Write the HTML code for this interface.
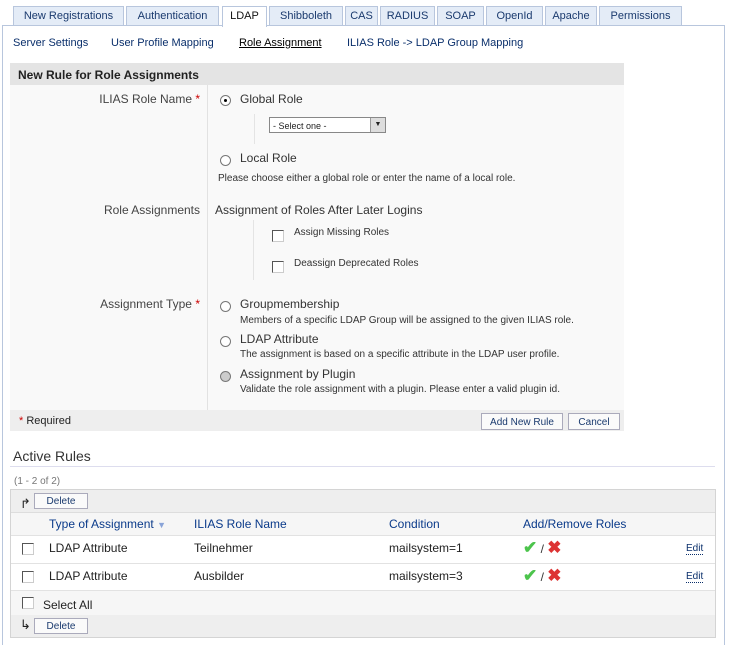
<!DOCTYPE html>
<html><head><style>
*{margin:0;padding:0;box-sizing:border-box}
body{width:731px;height:641px;background:#fff;font-family:"Liberation Sans",Verdana,sans-serif;font-size:12px;color:#222;position:relative;overflow:hidden}
.a{position:absolute;white-space:nowrap}
.tab{position:absolute;top:6px;height:20px;background:#e4ecf7;border:1px solid #b8c6dd;border-bottom:none;color:#1a3a6e;font-size:11px;text-align:center;line-height:18px}
.tab.on{background:#fff;height:21px;color:#111}
.sub{font-size:11px;color:#0a2f6b;top:37px}
.req{color:#c00}
.rad{position:absolute;width:11px;height:11px;border-radius:50%;border:1px solid #777;background:#fff}
.chk{position:absolute;width:12px;height:12px;border:1px solid #555;background:#fff;border-right-color:#ccc;border-bottom-color:#ccc}
.sm{font-size:10px;color:#333}
.btn{position:absolute;height:16px;border:1px solid #aab;background:#fafafa;font-size:10px;color:#1a3a6e;line-height:16px;text-align:center}
.th{font-size:12px;color:#0a3a8a;top:517px}
.td{font-size:12px;color:#222}
</style></head><body>
<div class="tab" style="left:13px;width:111px">New Registrations</div>
<div class="tab" style="left:126px;width:93px">Authentication</div>
<div class="tab" style="left:269px;width:74px">Shibboleth</div>
<div class="tab" style="left:345px;width:33px">CAS</div>
<div class="tab" style="left:380px;width:55px">RADIUS</div>
<div class="tab" style="left:437px;width:47px">SOAP</div>
<div class="tab" style="left:486px;width:57px">OpenId</div>
<div class="tab" style="left:545px;width:52px">Apache</div>
<div class="tab" style="left:599px;width:83px">Permissions</div>
<div class="a" style="left:2px;top:25px;width:723px;height:620px;border:1px solid #b8c6dd;border-bottom:none"></div>
<div class="tab on" style="left:222px;width:45px;top:6px;border-bottom:none;z-index:2">LDAP</div>

<div class="a sub" style="left:13px">Server Settings</div>
<div class="a sub" style="left:111px">User Profile Mapping</div>
<div class="a sub" style="left:239px;color:#000;text-decoration:underline">Role Assignment</div>
<div class="a sub" style="left:347px">ILIAS Role -&gt; LDAP Group Mapping</div>

<div class="a" style="left:10px;top:63px;width:614px;height:368px;background:#f9f9f9;border-bottom:1px solid #d8dde8"></div>
<div class="a" style="left:10px;top:63px;width:614px;height:22px;background:#e4e4e4;font-weight:bold;font-size:12px;color:#222;padding:5px 0 0 8px">New Rule for Role Assignments</div>
<div class="a" style="left:207px;top:85px;width:1px;height:325px;background:#e2e2e2"></div>
<div class="a" style="left:10px;top:410px;width:614px;height:21px;background:#eee"></div>

<div class="a" style="left:10px;width:190px;top:92px;text-align:right;color:#444">ILIAS Role Name <span class="req">*</span></div>
<div class="rad" style="left:220px;top:95px"><div style="width:3px;height:3px;background:#000;border-radius:50%;margin:3px"></div></div>
<div class="a" style="left:240px;top:92px;color:#333">Global Role</div>
<div class="a" style="left:254px;top:114px;width:1px;height:30px;background:#e4e4e4"></div>
<div class="a" style="left:269px;top:117px;width:117px;height:16px;border:1px solid #888;background:#fff;font-size:9px;padding:3px 0 0 3px">- Select one -</div>
<div class="a" style="left:370px;top:118px;width:15px;height:14px;background:#ddd;border-left:1px solid #999;font-size:7px;text-align:center;line-height:14px">▼</div>
<div class="rad" style="left:220px;top:155px"></div>
<div class="a" style="left:240px;top:151px;color:#333">Local Role</div>
<div class="a sm" style="left:218px;top:173px">Please choose either a global role or enter the name of a local role.</div>

<div class="a" style="left:10px;width:190px;top:203px;text-align:right;color:#444">Role Assignments</div>
<div class="a" style="left:215px;top:203px;color:#333">Assignment of Roles After Later Logins</div>
<div class="a" style="left:253px;top:220px;width:1px;height:60px;background:#e4e4e4"></div>
<div class="chk" style="left:272px;top:230px"></div>
<div class="a sm" style="left:294px;top:227px">Assign Missing Roles</div>
<div class="chk" style="left:272px;top:261px"></div>
<div class="a sm" style="left:294px;top:258px">Deassign Deprecated Roles</div>

<div class="a" style="left:10px;width:190px;top:297px;text-align:right;color:#444">Assignment Type <span class="req">*</span></div>
<div class="rad" style="left:220px;top:301px"></div>
<div class="a" style="left:240px;top:297px;color:#333">Groupmembership</div>
<div class="a sm" style="left:240px;top:315px">Members of a specific LDAP Group will be assigned to the given ILIAS role.</div>
<div class="rad" style="left:220px;top:336px"></div>
<div class="a" style="left:240px;top:332px;color:#333">LDAP Attribute</div>
<div class="a sm" style="left:240px;top:349px">The assignment is based on a specific attribute in the LDAP user profile.</div>
<div class="rad" style="left:220px;top:371px;background:#ccc"></div>
<div class="a" style="left:240px;top:367px;color:#333">Assignment by Plugin</div>
<div class="a sm" style="left:240px;top:384px">Validate the role assignment with a plugin. Please enter a valid plugin id.</div>

<div class="a" style="left:19px;top:415px;font-size:11px"><span class="req">*</span> Required</div>
<div class="btn" style="left:481px;top:413px;width:82px;height:17px;line-height:17px">Add New Rule</div>
<div class="btn" style="left:568px;top:413px;width:52px;height:17px;line-height:17px">Cancel</div>

<div class="a" style="left:13px;top:448px;font-size:14px;color:#333">Active Rules</div>
<div class="a" style="left:10px;top:466px;width:705px;height:1px;background:#dde"></div>
<div class="a" style="left:14px;top:476px;font-size:10px;color:#777">(1 - 2 of 2)</div>

<div class="a" style="left:10px;top:489px;width:706px;height:149px;border:1px solid #d4d4d4;background:#fff"></div>
<div class="a" style="left:11px;top:490px;width:704px;height:23px;background:#eee;border-bottom:1px solid #ddd"></div>
<div class="a" style="left:11px;top:513px;width:704px;height:23px;background:#f6f6f6;border-bottom:1px solid #e2e2e2"></div>
<div class="a" style="left:11px;top:563px;width:704px;height:1px;background:#e2e2e2"></div>
<div class="a" style="left:11px;top:590px;width:704px;height:1px;background:#e2e2e2"></div>
<div class="a" style="left:11px;top:591px;width:704px;height:24px;background:#f6f6f6"></div>
<div class="a" style="left:11px;top:615px;width:704px;height:22px;background:#eee"></div>

<div class="a" style="left:20px;top:496px;font-size:13px">↱</div>
<div class="btn" style="left:34px;top:493px;width:54px">Delete</div>
<div class="a" style="left:20px;top:617px;font-size:13px">↳</div>
<div class="btn" style="left:34px;top:618px;width:54px">Delete</div>

<div class="a th" style="left:49px">Type of Assignment <span style="color:#8aa4d8;font-size:9px">▼</span></div>
<div class="a th" style="left:194px">ILIAS Role Name</div>
<div class="a th" style="left:389px">Condition</div>
<div class="a th" style="left:523px">Add/Remove Roles</div>

<div class="chk" style="left:22px;top:543px"></div>
<div class="a td" style="left:49px;top:541px">LDAP Attribute</div>
<div class="a td" style="left:194px;top:541px">Teilnehmer</div>
<div class="a td" style="left:389px;top:541px">mailsystem=1</div>
<div class="a" style="left:523px;top:538px;font-size:17px;color:#4cc44c;font-weight:bold">✔<span style="font-size:12px;color:#333;font-weight:normal"> / </span><span style="color:#d33">✖</span></div>
<div class="a" style="left:686px;top:543px;font-size:10px;color:#0a2f6b;border-bottom:1px dotted #0a2f6b">Edit</div>

<div class="chk" style="left:22px;top:571px"></div>
<div class="a td" style="left:49px;top:569px">LDAP Attribute</div>
<div class="a td" style="left:194px;top:569px">Ausbilder</div>
<div class="a td" style="left:389px;top:569px">mailsystem=3</div>
<div class="a" style="left:523px;top:566px;font-size:17px;color:#4cc44c;font-weight:bold">✔<span style="font-size:12px;color:#333;font-weight:normal"> / </span><span style="color:#d33">✖</span></div>
<div class="a" style="left:686px;top:571px;font-size:10px;color:#0a2f6b;border-bottom:1px dotted #0a2f6b">Edit</div>

<div class="chk" style="left:22px;top:597px"></div>
<div class="a td" style="left:43px;top:598px">Select All</div>
</body></html>
